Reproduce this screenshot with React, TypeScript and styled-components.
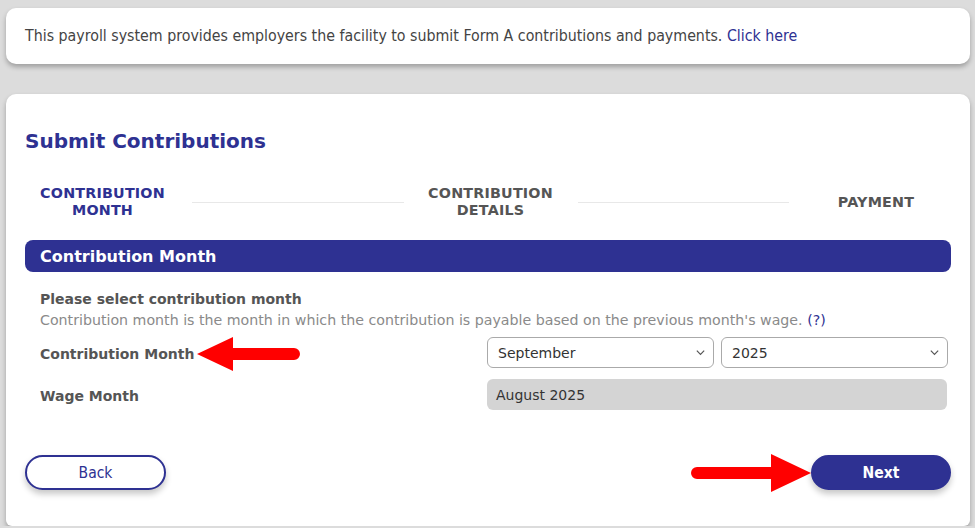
import React from "react";
import styled, { createGlobalStyle } from "styled-components";

const NAVY = "#2e3192";

const GlobalStyle = createGlobalStyle`
  html, body {
    margin: 0;
    padding: 0;
    background: #dcdcdc;
    font-family: "DejaVu Sans", Verdana, sans-serif;
  }
`;

const Page = styled.div`
  display: flex;
  flex-direction: column;
  gap: 30px;
  padding: 8px 5px 0 6px;
`;

const Card = styled.div`
  background: #fff;
  border-radius: 10px;
  box-shadow: 0 3px 5px rgba(0, 0, 0, 0.28);
`;

const InfoCard = styled(Card)`
  padding: 18px 19px 18px;
  font-family: "DejaVu Sans Condensed", "DejaVu Sans", sans-serif;
  font-size: 15.8px;
  color: #444;
  line-height: 20px;
`;

const Link = styled.a`
  color: ${NAVY};
  text-decoration: none;
  cursor: pointer;
`;

const MainCard = styled(Card)`
  padding: 33px 19px 36px;
  border-radius: 10px 10px 6px 6px;
`;

const Title = styled.h1`
  margin: 0 0 30px;
  font-size: 20px;
  font-weight: bold;
  color: ${NAVY};
  line-height: 28px;
`;

const Stepper = styled.div`
  display: flex;
  align-items: center;
  margin-bottom: 21px;
`;

const Step = styled.div<{ $active?: boolean; $width: number }>`
  width: ${(p) => p.$width}px;
  text-align: center;
  font-size: 14.3px;
  font-weight: bold;
  line-height: 17px;
  color: ${(p) => (p.$active ? NAVY : "#555")};
  letter-spacing: 0.2px;
`;

const StepLine = styled.div`
  flex: 1;
  height: 1px;
  background: #e8e8e8;
  margin: 0 12px;
`;

const SectionBar = styled.div`
  background: ${NAVY};
  color: #fff;
  border-radius: 8px;
  height: 32px;
  display: flex;
  align-items: center;
  padding: 0 15px;
  font-size: 16px;
  font-weight: bold;
`;

const SectionBody = styled.div`
  padding: 17px 3px 0 15px;
`;

const Prompt = styled.div`
  font-size: 14px;
  font-weight: bold;
  color: #555;
  line-height: 20px;
`;

const Hint = styled.div`
  font-size: 14.2px;
  color: #8a8a8a;
  line-height: 23px;
  margin-bottom: 5px;
`;

const HelpLink = styled.span`
  color: ${NAVY};
`;

const FormGrid = styled.div`
  display: grid;
  grid-template-columns: 1fr 461px;
  row-gap: 11px;
  align-items: center;
`;

const Label = styled.div`
  font-size: 14px;
  font-weight: bold;
  color: #555;
  padding-top: 3px;
`;

const LabelText = styled.span`
  position: relative;
`;

const Selects = styled.div`
  display: flex;
  gap: 7px;
`;

const SelectBox = styled.div`
  flex: 1;
  height: 31px;
  box-sizing: border-box;
  border: 1px solid #aaa;
  border-radius: 6px;
  background: #fff;
  display: flex;
  align-items: center;
  justify-content: space-between;
  padding: 0 7px 0 10px;
  font-size: 14px;
  color: #333;
`;

const ReadOnly = styled.div`
  height: 31px;
  margin-right: 1px;
  border-radius: 6px;
  background: #d4d4d4;
  display: flex;
  align-items: center;
  padding: 0 9px;
  font-size: 14px;
  color: #333;
`;

const Actions = styled.div`
  display: flex;
  justify-content: space-between;
  align-items: center;
  margin-top: 45px;
`;

const PillButton = styled.button<{ $primary?: boolean }>`
  position: relative;
  width: ${(p) => (p.$primary ? 140 : 141)}px;
  height: 35px;
  border-radius: 18px;
  border: 2px solid ${NAVY};
  background: ${(p) => (p.$primary ? NAVY : "#fff")};
  color: ${(p) => (p.$primary ? "#fff" : NAVY)};
  font-family: "DejaVu Sans Condensed", "DejaVu Sans", sans-serif;
  font-size: 15.5px;
  font-weight: ${(p) => (p.$primary ? "bold" : "normal")};
  box-shadow: 0 4px 6px rgba(0, 0, 0, 0.22);
  cursor: pointer;
`;

const Arrow = styled.svg<{ $side: "left" | "right" }>`
  position: absolute;
  top: 50%;
  transform: translateY(-50%);
  ${(p) => (p.$side === "left" ? "left: calc(100% + 3px);" : "right: calc(100% + 2px);")}
  pointer-events: none;
`;

const Chevron = () => (
  <svg width="11" height="11" viewBox="0 0 12 12">
    <path d="M2 4l4 4 4-4" fill="none" stroke="#555" strokeWidth="1.3" />
  </svg>
);

const LeftArrow = () => (
  <Arrow $side="left" width="104" height="34" viewBox="0 0 104 34">
    <path
      d="M0 17 L36 0 L36 11 L97 11 A6 6 0 0 1 97 23 L36 23 L36 34 Z"
      fill="#ff0000"
    />
  </Arrow>
);

const RightArrow = () => (
  <Arrow $side="right" width="120" height="38" viewBox="0 0 120 38">
    <path
      d="M120 19 L80 0 L80 13 L6 13 A6 6 0 0 0 6 25 L80 25 L80 38 Z"
      fill="#ff0000"
    />
  </Arrow>
);

export default function App() {
  return (
    <>
      <GlobalStyle />
      <Page>
        <InfoCard>
          This payroll system provides employers the facility to submit Form A
          contributions and payments. <Link>Click here</Link>
        </InfoCard>

        <MainCard>
          <Title>Submit Contributions</Title>

          <Stepper>
            <Step $active $width={155}>
              CONTRIBUTION
              <br />
              MONTH
            </Step>
            <StepLine />
            <Step $width={150}>
              CONTRIBUTION
              <br />
              DETAILS
            </Step>
            <StepLine />
            <Step $width={150}>PAYMENT</Step>
          </Stepper>

          <SectionBar>Contribution Month</SectionBar>

          <SectionBody>
            <Prompt>Please select contribution month</Prompt>
            <Hint>
              Contribution month is the month in which the contribution is
              payable based on the previous month's wage.{" "}
              <HelpLink>(?)</HelpLink>
            </Hint>

            <FormGrid>
              <Label>
                <LabelText>
                  Contribution Month
                  <LeftArrow />
                </LabelText>
              </Label>
              <Selects>
                <SelectBox>
                  September
                  <Chevron />
                </SelectBox>
                <SelectBox>
                  2025
                  <Chevron />
                </SelectBox>
              </Selects>

              <Label>Wage Month</Label>
              <ReadOnly>August 2025</ReadOnly>
            </FormGrid>
          </SectionBody>

          <Actions>
            <PillButton>Back</PillButton>
            <PillButton $primary>
              Next
              <RightArrow />
            </PillButton>
          </Actions>
        </MainCard>
      </Page>
    </>
  );
}
